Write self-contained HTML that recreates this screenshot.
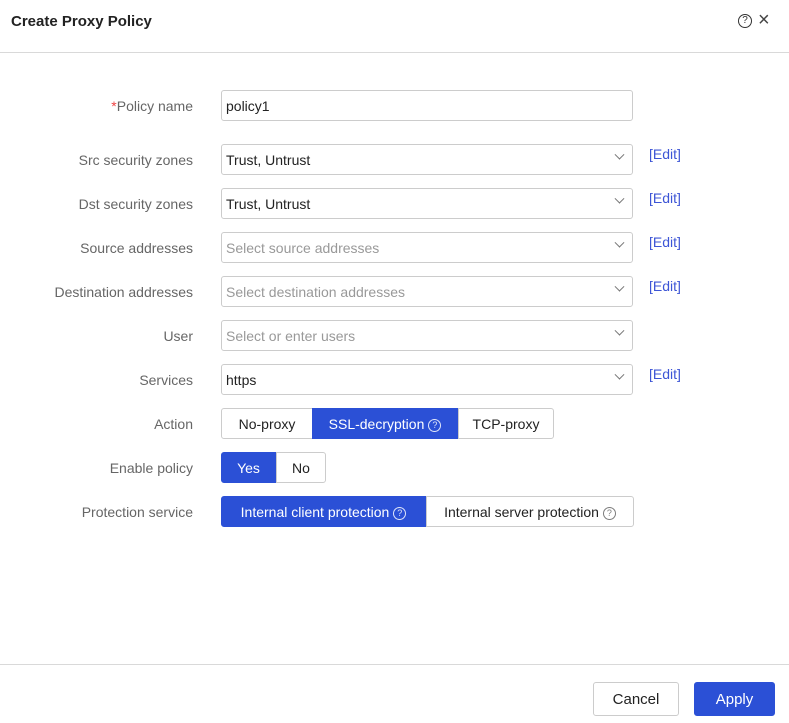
<!DOCTYPE html>
<html><head><meta charset="utf-8"><style>
*{box-sizing:border-box;margin:0;padding:0}
body{width:789px;height:723px;background:#fff;font-family:"Liberation Sans",sans-serif;font-size:14px;color:#333;position:relative;overflow:hidden}
.a{position:absolute}
.title{left:11px;top:13px;font-size:15px;font-weight:bold;color:#222}
.hr{left:0;width:789px;height:1px;background:#d9d9d9}
.lbl{right:596px;width:180px;text-align:right;color:#666;font-size:14px;line-height:32px}
.inp{left:221px;width:412px;height:31px;border:1px solid #ccc;border-radius:3px;line-height:30px;padding-left:4px;color:#222}
.ph{color:#999}
.arr{position:absolute;right:9px;top:9px;width:7px;height:7px;border-right:1.3px solid #777;border-bottom:1.3px solid #777;transform:rotate(45deg) translate(-2px,-2px)}
.edit{left:649px;color:#3d55d6;font-size:14px}
.btn{height:31px;line-height:30px;text-align:center;border:1px solid #ccc;color:#222;background:#fff}
.on{background:#2b50d6;border-color:#2b50d6;color:#fff}
.q{display:inline-block;width:13px;height:13px;border:1px solid currentColor;border-radius:50%;font-size:9px;line-height:11px;text-align:center;vertical-align:1px;margin-left:4px;opacity:.85}
</style></head><body>
<div class="a title">Create Proxy Policy</div>
<div class="a" style="left:738px;top:14px;width:14px;height:14px;border:1px solid #333;border-radius:50%;font-size:10px;line-height:12px;text-align:center">?</div>
<div class="a" style="left:758px;top:9px;font-size:20px;color:#444;font-weight:normal">×</div>
<div class="a hr" style="top:52px"></div>

<div class="a lbl" style="top:90px"><span style="color:#e44">*</span>Policy name</div>
<div class="a inp" style="top:90px">policy1</div>

<div class="a lbl" style="top:144px">Src security zones</div>
<div class="a inp" style="top:144px">Trust, Untrust<i class="arr"></i></div>
<div class="a edit" style="top:146px">[Edit]</div>

<div class="a lbl" style="top:188px">Dst security zones</div>
<div class="a inp" style="top:188px">Trust, Untrust<i class="arr"></i></div>
<div class="a edit" style="top:190px">[Edit]</div>

<div class="a lbl" style="top:232px">Source addresses</div>
<div class="a inp ph" style="top:232px">Select source addresses<i class="arr"></i></div>
<div class="a edit" style="top:234px">[Edit]</div>

<div class="a lbl" style="top:276px">Destination addresses</div>
<div class="a inp ph" style="top:276px">Select destination addresses<i class="arr"></i></div>
<div class="a edit" style="top:278px">[Edit]</div>

<div class="a lbl" style="top:320px">User</div>
<div class="a inp ph" style="top:320px">Select or enter users<i class="arr"></i></div>

<div class="a lbl" style="top:364px">Services</div>
<div class="a inp" style="top:364px">https<i class="arr"></i></div>
<div class="a edit" style="top:366px">[Edit]</div>

<div class="a lbl" style="top:408px">Action</div>
<div class="a btn" style="top:408px;left:221px;width:92px;border-radius:3px 0 0 3px">No-proxy</div>
<div class="a btn on" style="top:408px;left:312px;width:146px">SSL-decryption<span class="q">?</span></div>
<div class="a btn" style="top:408px;left:458px;width:96px;border-radius:0 3px 3px 0">TCP-proxy</div>

<div class="a lbl" style="top:452px">Enable policy</div>
<div class="a btn on" style="top:452px;left:221px;width:55px;border-radius:3px 0 0 3px">Yes</div>
<div class="a btn" style="top:452px;left:276px;width:50px;border-radius:0 3px 3px 0">No</div>

<div class="a lbl" style="top:496px">Protection service</div>
<div class="a btn on" style="top:496px;left:221px;width:205px;border-radius:3px 0 0 3px">Internal client protection<span class="q">?</span></div>
<div class="a btn" style="top:496px;left:426px;width:208px;border-radius:0 3px 3px 0">Internal server protection<span class="q" style="color:#666">?</span></div>

<div class="a hr" style="top:664px"></div>
<div class="a btn" style="top:682px;left:593px;width:86px;height:34px;line-height:33px;border-radius:3px;font-size:15px">Cancel</div>
<div class="a btn on" style="top:682px;left:694px;width:81px;height:34px;line-height:33px;border-radius:3px;font-size:15px">Apply</div>
</body></html>
